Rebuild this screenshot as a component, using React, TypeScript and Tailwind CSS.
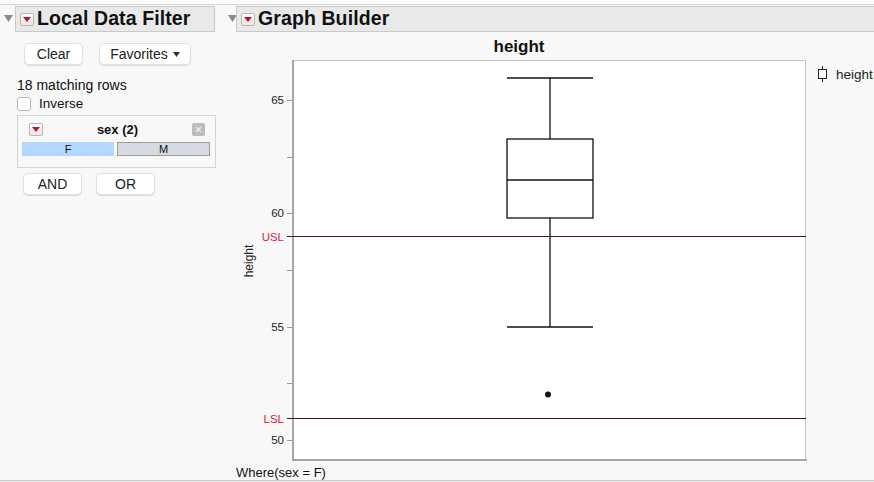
import React from "react";

// JMP-style report: Local Data Filter on the left, Graph Builder box plot on the right.

const font = { fontFamily: '"Liberation Sans", Arial, sans-serif' };

function Disclosure() {
  return (
    <svg width="9" height="8" viewBox="0 0 9 8" className="shrink-0">
      <path d="M0 0 L9 0 L4.5 7 Z" fill="#8a8a8a" />
    </svg>
  );
}

function RedMenu() {
  return (
    <span className="flex h-[13px] w-[14px] shrink-0 items-center justify-center rounded-[2px] border border-[#bdb3b3] bg-gradient-to-b from-white to-[#ece6e6]">
      <svg width="8" height="5" viewBox="0 0 8 5">
        <path d="M0 0 L8 0 L4 5 Z" fill="#c8102e" />
      </svg>
    </span>
  );
}

function Btn({ children, w }: { children: React.ReactNode; w: string }) {
  return (
    <button
      className={`flex h-[22px] ${w} items-center justify-center rounded-[5px] border border-[#e0e0e0] bg-white text-[14px] text-[#222] shadow-[0_1px_1px_rgba(0,0,0,0.12)]`}
    >
      {children}
    </button>
  );
}

const ticks = [
  { v: 65, y: 99, label: true },
  { v: 62.5, y: 156, label: false },
  { v: 60, y: 212, label: true },
  { v: 57.5, y: 269, label: false },
  { v: 55, y: 326, label: true },
  { v: 52.5, y: 382, label: false },
  { v: 50, y: 439, label: true },
];

function Chart() {
  return (
    <svg width="638" height="410" viewBox="236 55 638 410" className="block" style={font}>
      {/* plot frame */}
      <rect x="293.5" y="59.5" width="512" height="399" fill="#fff" stroke="#c4c4c4" />
      <line x1="293" y1="59" x2="293" y2="459" stroke="#a6a6a6" strokeWidth="2" />
      <line x1="292" y1="459" x2="807" y2="459" stroke="#a6a6a6" strokeWidth="2" />

      {ticks.map((t) => (
        <g key={t.v}>
          <line x1="287" y1={t.y + 0.5} x2="292" y2={t.y + 0.5} stroke="#9a9a9a" />
          {t.label && (
            <text x="284" y={t.y + 4} fontSize="11.5" textAnchor="end" fill="#222">
              {t.v}
            </text>
          )}
        </g>
      ))}

      {/* spec limits */}
      <line x1="287" y1="235.5" x2="806" y2="235.5" stroke="#4a1418" />
      <text x="284" y="239.5" fontSize="11.5" textAnchor="end" fill="#e0203a">
        USL
      </text>
      <line x1="287" y1="417.5" x2="806" y2="417.5" stroke="#4a1418" />
      <text x="284" y="421.5" fontSize="11.5" textAnchor="end" fill="#e0203a">
        LSL
      </text>

      <text x="253" y="260" fontSize="12" textAnchor="middle" fill="#222" transform="rotate(-90 253 260)">
        height
      </text>

      {/* box plot */}
      <g stroke="#111" strokeWidth="1.3" fill="none">
        <line x1="507" y1="77" x2="593" y2="77" />
        <line x1="550" y1="77" x2="550" y2="138" />
        <rect x="507" y="138" width="86" height="79" fill="#fff" />
        <line x1="507" y1="179" x2="593" y2="179" />
        <line x1="550" y1="217" x2="550" y2="326" />
        <line x1="507" y1="326" x2="593" y2="326" />
      </g>
      <circle cx="548" cy="393.5" r="3" fill="#111" />

      {/* legend */}
      <g stroke="#222" strokeWidth="1" fill="#fff">
        <line x1="822.5" y1="65" x2="822.5" y2="81" />
        <rect x="818.5" y="68.5" width="8" height="9" />
      </g>
      <text x="836" y="78" fontSize="13.5" fill="#222">
        height
      </text>
    </svg>
  );
}

export default function App() {
  return (
    <div className="relative h-[482px] w-[874px] overflow-hidden bg-[#f8f8f8] text-[#111]" style={font}>
      <div className="h-[5px] border-b border-[#d4d4d4] bg-[#fbfbfb]" />
      <div className="flex">
        {/* Local Data Filter */}
        <div className="w-[228px] shrink-0">
          <div className="mt-px flex items-center">
            <span className="flex w-[15px] justify-center pl-px">
              <Disclosure />
            </span>
            <div className="flex h-[26px] w-[200px] items-center gap-[3px] border border-[#c9c9c9] bg-[#e9e9e9] pl-[4px]">
              <RedMenu />
              <span className="text-[19.5px] font-bold leading-none tracking-[0.1px]">Local Data Filter</span>
            </div>
          </div>
          <div className="mt-[11px] flex gap-[16px] pl-[24px]">
            <Btn w="w-[59px]">Clear</Btn>
            <Btn w="w-[92px]">
              <span className="flex items-center gap-[5px]">
                Favorites
                <svg width="7" height="5" viewBox="0 0 7 5">
                  <path d="M0 0 L7 0 L3.5 5 Z" fill="#333" />
                </svg>
              </span>
            </Btn>
          </div>
          <div className="mt-[12px] pl-[17px] text-[14px] leading-[16px]">18 matching rows</div>
          <div className="mt-[4px] flex items-center gap-[8px] pl-[17px]">
            <span className="h-[14px] w-[14px] rounded-[3px] border border-[#b5b5b5] bg-white" />
            <span className="text-[13.5px] leading-none">Inverse</span>
          </div>
          <div className="ml-[17px] mt-[4px] h-[53px] w-[199px] border border-[#d3d3d3] bg-[#f8f8f8] px-[4px] pt-[6px]">
            <div className="flex h-[14px] items-center pl-[7px] pr-[6px]">
              <RedMenu />
              <span className="flex-1 text-center text-[13px] font-bold leading-none">sex (2)</span>
              <span className="flex h-[13px] w-[13px] items-center justify-center rounded-[2px] bg-[#bcbcbc]">
                <svg width="7" height="7" viewBox="0 0 7 7">
                  <path d="M1 1 L6 6 M6 1 L1 6" stroke="#eee" strokeWidth="1.4" />
                </svg>
              </span>
            </div>
            <div className="mt-[6px] flex gap-[3px]">
              <div className="flex h-[14px] w-[92px] items-center justify-center bg-[#b4d7ff] text-[11px] leading-none">F</div>
              <div className="flex h-[14px] w-[93px] items-center justify-center border border-[#9d9d9d] bg-[#d5d9e1] text-[11px] leading-none">M</div>
            </div>
          </div>
          <div className="mt-[5px] flex gap-[14px] pl-[23px]">
            <Btn w="w-[59px]">AND</Btn>
            <Btn w="w-[59px]">OR</Btn>
          </div>
        </div>

        {/* Graph Builder */}
        <div className="flex-1">
          <div className="mt-px flex items-center">
            <span className="flex w-[8px] justify-start">
              <Disclosure />
            </span>
            <div className="flex h-[26px] flex-1 items-center gap-[3px] border border-r-0 border-[#c9c9c9] bg-[#e9e9e9] pl-[4px]">
              <RedMenu />
              <span className="text-[19.5px] font-bold leading-none tracking-[0.1px]">Graph Builder</span>
            </div>
          </div>
          <div className="pl-[8px]">
            <div className="w-[566px] pt-[5px] text-center text-[17px] font-bold leading-[19px]">height</div>
            <Chart />
            <div className="mt-[-1px] text-[13px] leading-[16px]">Where(sex = F)</div>
          </div>
        </div>
      </div>
      <div className="absolute bottom-0 left-0 h-[2px] w-full border-t border-[#c8c8c8] bg-[#eee]" />
    </div>
  );
}
